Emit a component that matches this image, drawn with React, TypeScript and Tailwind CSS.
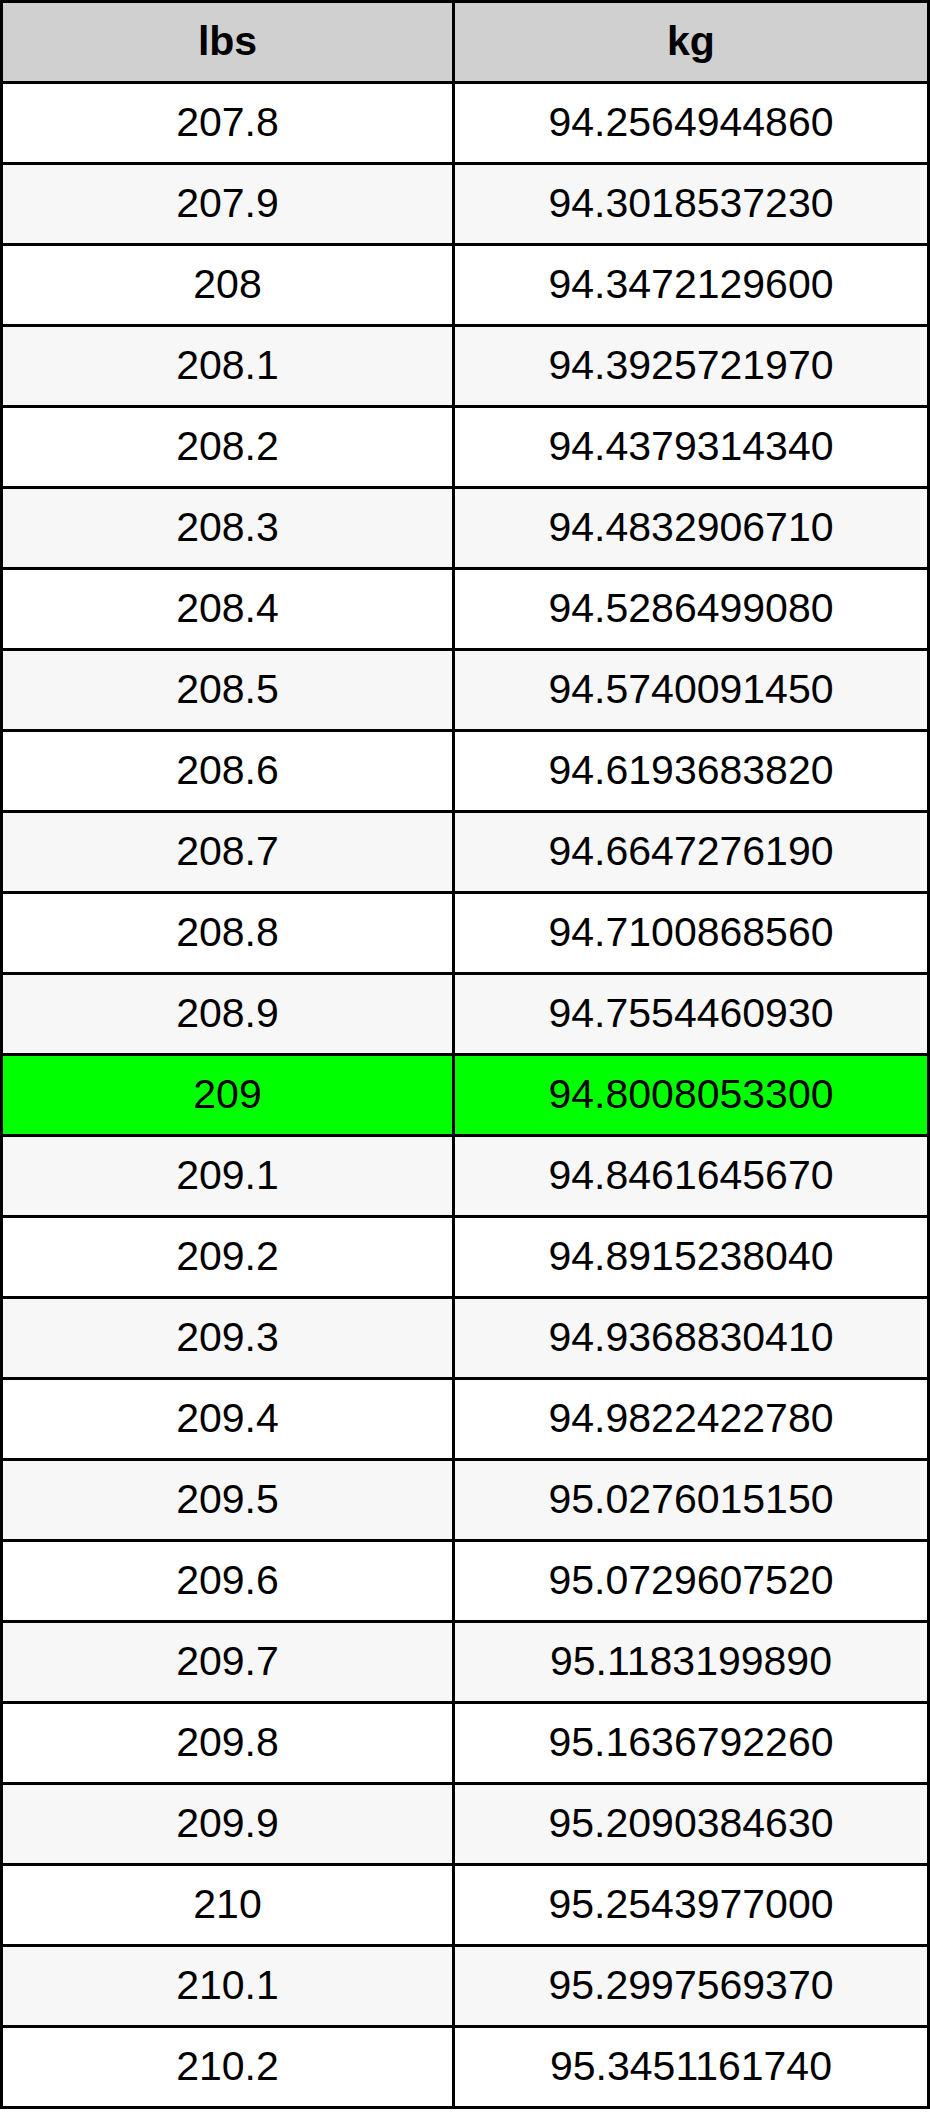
import React from "react";

const rows: [string, string][] = [
  ["207.8", "94.2564944860"],
  ["207.9", "94.3018537230"],
  ["208", "94.3472129600"],
  ["208.1", "94.3925721970"],
  ["208.2", "94.4379314340"],
  ["208.3", "94.4832906710"],
  ["208.4", "94.5286499080"],
  ["208.5", "94.5740091450"],
  ["208.6", "94.6193683820"],
  ["208.7", "94.6647276190"],
  ["208.8", "94.7100868560"],
  ["208.9", "94.7554460930"],
  ["209", "94.8008053300"],
  ["209.1", "94.8461645670"],
  ["209.2", "94.8915238040"],
  ["209.3", "94.9368830410"],
  ["209.4", "94.9822422780"],
  ["209.5", "95.0276015150"],
  ["209.6", "95.0729607520"],
  ["209.7", "95.1183199890"],
  ["209.8", "95.1636792260"],
  ["209.9", "95.2090384630"],
  ["210", "95.2543977000"],
  ["210.1", "95.2997569370"],
  ["210.2", "95.3451161740"],
];

export default function App() {
  return (
    <div className="w-[930px] bg-white" style={{ fontFamily: '"Liberation Sans", Arial, sans-serif' }}>
      <div className="grid grid-cols-[449px_472px] gap-[3px] bg-black p-[3px] text-[41px] text-black">
        <div className="h-[78px] flex items-center justify-center bg-[#d0d0d0] font-bold">lbs</div>
        <div className="h-[78px] flex items-center justify-center bg-[#d0d0d0] font-bold">kg</div>
        {rows.map(([a, b], i) => {
          const bg = a === "209" ? "bg-[#00ff00]" : i % 2 === 1 ? "bg-[#f7f7f7]" : "bg-white";
          return (
            <React.Fragment key={a}>
              <div className={`h-[78px] flex items-center justify-center ${bg}`}>{a}</div>
              <div className={`h-[78px] flex items-center justify-center ${bg}`}>{b}</div>
            </React.Fragment>
          );
        })}
      </div>
    </div>
  );
}
